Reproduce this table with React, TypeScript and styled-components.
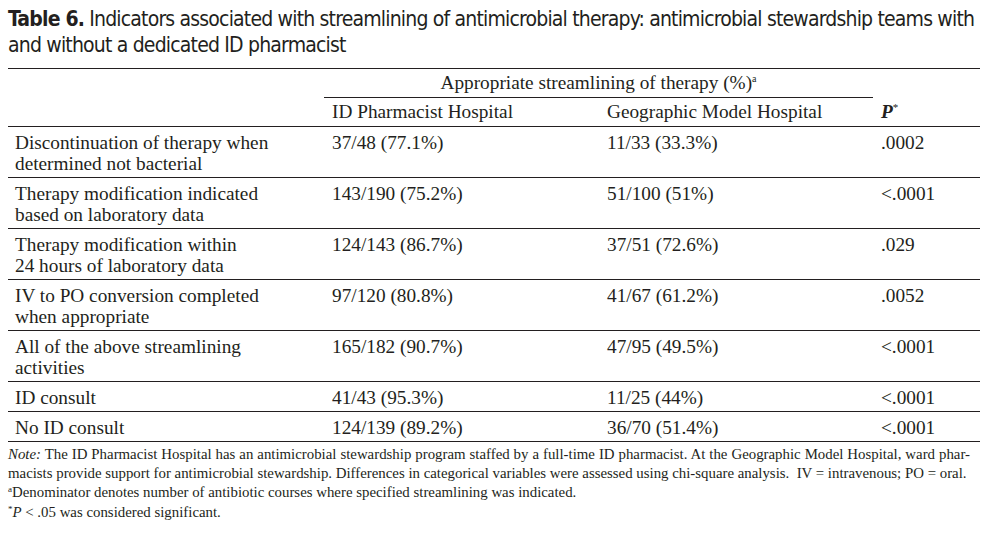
import React from "react"
import styled, { createGlobalStyle } from "styled-components"

const ink = "#231f20"
const serif = `"Liberation Serif", "Times New Roman", serif`
const condensed = `"Liberation Sans Narrow", "DejaVu Sans Condensed", "Arial Narrow", Roboto, sans-serif`

interface Indicator {
  label: string[]
  pharmacist: string
  geographic: string
  p: string
}

const indicators: Indicator[] = [
  {
    label: ["Discontinuation of therapy when", "determined not bacterial"],
    pharmacist: "37/48 (77.1%)",
    geographic: "11/33 (33.3%)",
    p: ".0002",
  },
  {
    label: ["Therapy modification indicated", "based on laboratory data"],
    pharmacist: "143/190 (75.2%)",
    geographic: "51/100 (51%)",
    p: "<.0001",
  },
  {
    label: ["Therapy modification within", "24 hours of laboratory data"],
    pharmacist: "124/143 (86.7%)",
    geographic: "37/51 (72.6%)",
    p: ".029",
  },
  {
    label: ["IV to PO conversion completed", "when appropriate"],
    pharmacist: "97/120 (80.8%)",
    geographic: "41/67 (61.2%)",
    p: ".0052",
  },
  {
    label: ["All of the above streamlining", "activities"],
    pharmacist: "165/182 (90.7%)",
    geographic: "47/95 (49.5%)",
    p: "<.0001",
  },
  {
    label: ["ID consult"],
    pharmacist: "41/43 (95.3%)",
    geographic: "11/25 (44%)",
    p: "<.0001",
  },
  {
    label: ["No ID consult"],
    pharmacist: "124/139 (89.2%)",
    geographic: "36/70 (51.4%)",
    p: "<.0001",
  },
]

const App: React.FunctionComponent = () => {
  function renderBodyRows() {
    return indicators.map((row, index) => (
      <BodyRow key={index}>
        <Cell>
          {row.label.map((line, i) => (
            <Line key={i}>{line}</Line>
          ))}
        </Cell>
        <Cell>{row.pharmacist}</Cell>
        <Cell>{row.geographic}</Cell>
        <Cell>{row.p}</Cell>
      </BodyRow>
    ))
  }

  return (
    <Page>
      <GlobalStyle />
      <Caption>
        <CaptionLine>
          <strong>Table 6.</strong> Indicators associated with streamlining of
          antimicrobial therapy: antimicrobial stewardship teams with
        </CaptionLine>
        <CaptionLine>and without a dedicated ID pharmacist</CaptionLine>
      </Caption>
      <Table>
        <colgroup>
          <col style={{ width: 316 }} />
          <col style={{ width: 275 }} />
          <col style={{ width: 274 }} />
          <col />
        </colgroup>
        <thead>
          <SpanRow>
            <HeadCell />
            <SpanCell colSpan={2}>
              Appropriate streamlining of therapy (%)<Sup>a</Sup>
            </SpanCell>
            <HeadCell />
          </SpanRow>
          <HeadRow>
            <HeadCell />
            <HeadCell>ID Pharmacist Hospital</HeadCell>
            <HeadCell>Geographic Model Hospital</HeadCell>
            <HeadCell>
              <PMark>P</PMark>
              <Star>*</Star>
            </HeadCell>
          </HeadRow>
        </thead>
        <tbody>{renderBodyRows()}</tbody>
      </Table>
      <Notes>
        <JustifiedLine>
          <em>Note:</em> The ID Pharmacist Hospital has an antimicrobial
          stewardship program staffed by a full-time ID pharmacist. At the
          Geographic Model Hospital, ward phar-
        </JustifiedLine>
        <NoteLine>
          macists provide support for antimicrobial stewardship. Differences in
          categorical variables were assessed using chi-square analysis.&nbsp;
          IV = intravenous; PO = oral.
        </NoteLine>
        <Footnote>
          <NoteMark>a</NoteMark>Denominator denotes number of antibiotic
          courses where specified streamlining was indicated.
        </Footnote>
        <Footnote>
          <NoteMark>*</NoteMark>
          <em>P</em> &lt; .05 was considered significant.
        </Footnote>
      </Notes>
    </Page>
  )
}

const GlobalStyle = createGlobalStyle`
  html, body {
    margin: 0;
    background: #ffffff;
  }
`

const Page = styled.div`
  width: 988px;
  height: 538px;
  box-sizing: border-box;
  padding: 6px 8px 0 8px;
  color: ${ink};
  font-family: ${serif};
  overflow: hidden;
`

const Caption = styled.div`
  font-family: ${condensed};
  font-size: 21px;
  line-height: 26px;
  letter-spacing: -0.82px;
  margin-bottom: 10px;

  strong {
    font-weight: 700;
  }
`

const CaptionLine = styled.div`
  white-space: nowrap;
`

const Table = styled.table`
  width: 972px;
  border-collapse: collapse;
  table-layout: fixed;
  border-top: 1px solid ${ink};
  font-size: 19.3px;
`

const SpanRow = styled.tr`
  height: 29px;
`

const HeadRow = styled.tr`
  height: 29px;
  border-bottom: 1px solid ${ink};
`

const HeadCell = styled.th`
  padding: 0 0 4px 8px;
  vertical-align: bottom;
  text-align: left;
  font-weight: 400;
  line-height: 21px;
  white-space: nowrap;
`

const SpanCell = styled(HeadCell)`
  padding: 0 0 4px 0;
  text-align: center;
  border-bottom: 1px solid ${ink};
`

const Sup = styled.sup`
  font-size: 10px;
  line-height: 0;
  vertical-align: 7px;
`

const PMark = styled.span`
  font-style: italic;
  font-weight: 700;
`

const Star = styled.sup`
  font-size: 11px;
  line-height: 0;
  vertical-align: 7px;
`

const BodyRow = styled.tr`
  border-bottom: 1px solid ${ink};
`

const Cell = styled.td`
  padding: 5px 0 3px 8px;
  vertical-align: top;
  line-height: 21px;
  white-space: nowrap;

  &:first-child {
    padding-left: 7px;
  }
`

const Line = styled.div``

const Notes = styled.div`
  padding: 3px 10px 0 0;
  font-size: 14.85px;
  line-height: 18.5px;
`

const JustifiedLine = styled.div`
  text-align: justify;
  text-align-last: justify;
  white-space: nowrap;
`

const NoteLine = styled.div`
  white-space: nowrap;
`

const Footnote = styled.div`
  margin-top: 1px;
  white-space: nowrap;
`

const NoteMark = styled.sup`
  font-size: 9px;
  line-height: 0;
  vertical-align: 5px;
`

export default App
